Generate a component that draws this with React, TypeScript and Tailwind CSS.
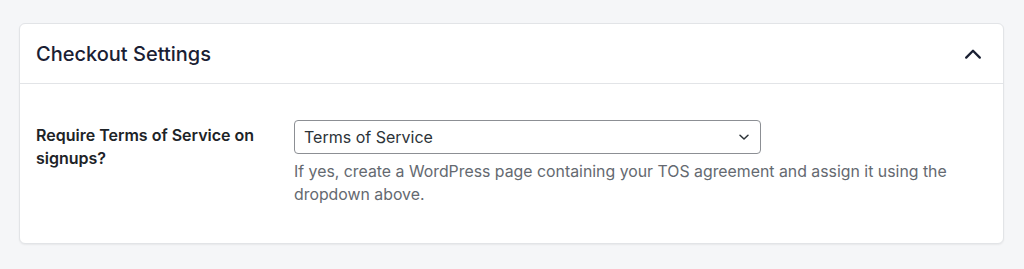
import React from 'react';

export default function App() {
  return (
    <div className="min-h-[269px] bg-[#f5f6f8] pt-[23px] pl-[19px] pr-[20px] font-['Inter',sans-serif]">
      <div className="bg-white border border-[#e2e4e7] rounded-[6px] shadow-[0_1px_2px_rgba(0,0,0,0.06)]">
        {/* Header */}
        <div className="h-[60px] flex items-center justify-between pl-[16px] pr-[21px] border-b border-[#e2e4e7]">
          <h2 className="text-[20px] font-medium text-[#1a2033]">Checkout Settings</h2>
          <svg width="18" height="16" viewBox="0 0 18 16" fill="none" className="text-[#1a2033]">
            <path d="M2.2 11.6 9 4.8l6.8 6.8" stroke="currentColor" strokeWidth="2.3" strokeLinecap="round" strokeLinejoin="round" />
          </svg>
        </div>

        {/* Body */}
        <div className="flex pl-[16px] pr-[36px] pt-[36px] pb-[37px]">
          <label className="w-[258px] shrink-0 pr-[24px] pt-[4px] text-[16px] leading-[23px] font-semibold text-[#1d2327]">
            Require Terms of Service on signups?
          </label>
          <div className="flex-1">
            <div className="w-[467px] h-[34px] flex items-center justify-between border border-[#8c8f94] rounded-[4px] pl-[9px] pr-[9px] text-[16px] text-[#2c3338]">
              <span>Terms of Service</span>
              <svg width="14" height="14" viewBox="0 0 14 14" fill="none">
                <path d="M3 5.2 7 9l4-3.8" stroke="#2c3338" strokeWidth="1.5" strokeLinecap="round" strokeLinejoin="round" />
              </svg>
            </div>
            <p className="mt-[6px] text-[15.85px] leading-[23px] text-[#646970] max-w-[680px]">
              If yes, create a WordPress page containing your TOS agreement and assign it using the dropdown above.
            </p>
          </div>
        </div>
      </div>
    </div>
  );
}
